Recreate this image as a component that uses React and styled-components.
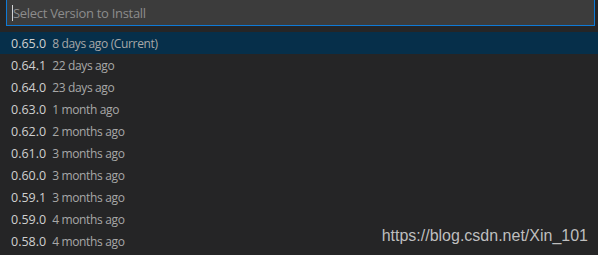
import React from 'react';
import styled, { createGlobalStyle } from 'styled-components';

const GlobalStyle = createGlobalStyle`
    html, body {
        margin: 0;
        padding: 0;
        background: #252526;
    }
`;

const Panel = styled.div`
    width: 598px;
    height: 255px;
    background: #252526;
    font-family: 'Open Sans', 'Noto Sans', sans-serif;
    position: relative;
    overflow: hidden;
`;

const InputRow = styled.div`
    padding: 0 3px 0 6px;
`;

const InputBox = styled.div`
    height: 25px;
    background: #3c3c3c;
    border: 1px solid #0f7ad6;
    border-top: none;
    display: flex;
    align-items: center;
    padding-left: 5px;
`;

const Caret = styled.span`
    width: 1px;
    height: 16px;
    background: #d4d4d4;
`;

const Placeholder = styled.span`
    font-size: 13px;
    color: #8c8c8c;
    letter-spacing: -0.3px;
`;

const List = styled.div`
    margin-top: 6px;
`;

const Row = styled.div`
    height: 22px;
    display: flex;
    align-items: center;
    padding-left: 11px;
    font-size: 12px;
    background: ${(p) => (p.selected ? '#062f4a' : 'transparent')};
`;

const Version = styled.span`
    color: #d0d0d0;
    font-size: 12.5px;
    margin-right: 6px;
`;

const Ago = styled.span`
    color: #a8a8a8;
    letter-spacing: -0.35px;
`;

const Watermark = styled.div`
    position: absolute;
    right: 10px;
    bottom: 10px;
    font-family: 'Liberation Sans', Arial, sans-serif;
    font-size: 16px;
    color: rgba(220, 220, 220, 0.85);
`;

const versions = [
    ['0.65.0', '8 days ago (Current)'],
    ['0.64.1', '22 days ago'],
    ['0.64.0', '23 days ago'],
    ['0.63.0', '1 month ago'],
    ['0.62.0', '2 months ago'],
    ['0.61.0', '3 months ago'],
    ['0.60.0', '3 months ago'],
    ['0.59.1', '3 months ago'],
    ['0.59.0', '4 months ago'],
    ['0.58.0', '4 months ago']
];

const App = () => (
    <>
        <GlobalStyle />
        <Panel>
            <InputRow>
                <InputBox>
                    <Caret />
                    <Placeholder>Select Version to Install</Placeholder>
                </InputBox>
            </InputRow>
            <List>
                {versions.map(([v, ago], i) => (
                    <Row key={v} selected={i === 0}>
                        <Version>{v}</Version>
                        <Ago>{ago}</Ago>
                    </Row>
                ))}
            </List>
            <Watermark>https://blog.csdn.net/Xin_101</Watermark>
        </Panel>
    </>
);

export default App;
